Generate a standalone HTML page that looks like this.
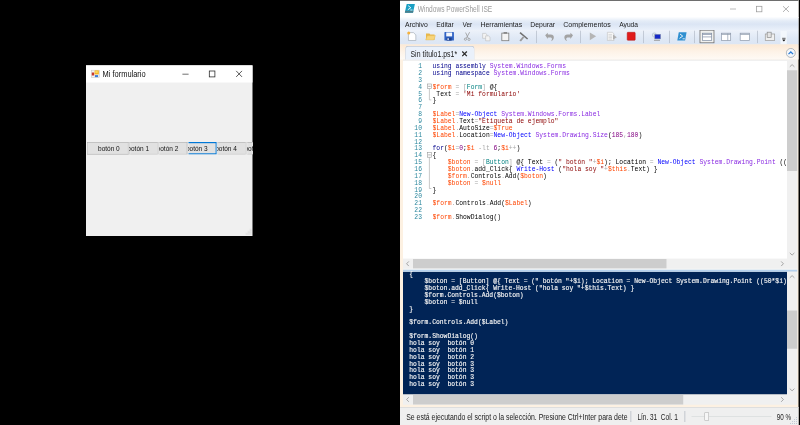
<!DOCTYPE html>
<html lang="es">
<head>
<meta charset="utf-8">
<title>Windows PowerShell ISE</title>
<style>
*{margin:0;padding:0;box-sizing:border-box}
html,body{width:800px;height:425px;overflow:hidden;background:#000}
#outer{position:absolute;left:0;top:0;width:3200px;height:1700px;transform:scale(.25);transform-origin:0 0}
#inner{position:relative;width:800px;height:425px;zoom:4}
body{position:relative;font-family:"Liberation Sans",sans-serif;color:#000}
.a{position:absolute}
.t{position:absolute;white-space:pre;line-height:1;transform-origin:0 0;will-change:opacity}
/* ---------- form window ---------- */
#form{left:86px;top:65.300px;width:166.600px;height:170.600px;background:#f0f0f0;overflow:hidden}
#ftitle{left:0;top:0;width:167px;height:17.300px;background:#fff}
#btns{left:0;top:-0.300px;width:668px;height:684px;transform:scale(.25);transform-origin:0 0}
.btn{position:absolute;top:308px;width:169.600px;height:50px;background:#e1e1e1;border:2.400px solid #adadad;font-size:26px;line-height:45.200px;white-space:pre;overflow:hidden;color:#111;text-align:center;clip-path:inset(0 0 0 56px)}
.btn span{display:block;will-change:opacity;padding-top:2px;padding-left:1.500px}
.btn.f{border:4.800px solid #0078d7;line-height:40.400px}
.btn.z{clip-path:none}
/* ---------- ISE window ---------- */
#ise{left:400px;top:0;width:398.6px;height:425px;background:#fdf1e2}
#ititle{left:0;top:0;width:100%;height:18px;background:#fff;border-top:1px solid #6e6e6e}
#menu{left:0;top:17px;width:100%;height:13px;background:linear-gradient(#fdfeff 0%,#e4ecf7 30%,#dbe5f4 55%,#e9f0fa 100%)}
.mi{position:absolute;top:20.2px;font-size:7.05px;line-height:1;white-space:pre;color:#1a1a1a}
#tool{left:0;top:30px;width:100%;height:14.6px;background:linear-gradient(#edf2fa 0%,#dfe8f5 60%,#dce6f4 100%)}
#tabs{left:0;top:44.6px;width:100%;height:15px;background:linear-gradient(#fce9d5 0%,#fdf3e8 50%,#fefaf5 100%)}
#tab{left:5.2px;top:46px;width:69.4px;height:14.600px;background:#eaf1fb;border:0.7px solid #a9b8cc;border-bottom:none;border-radius:3px 3px 0 0}
#edwrap{left:3px;top:59.4px;width:394.2px;height:210.4px;background:#f0f0f0}
#editor{left:3px;top:61px;width:384.1px;height:197.7px;background:#fff;overflow:hidden}
.code{position:absolute;font-family:"Liberation Mono",monospace;font-size:25.42px;line-height:27.44px;white-space:pre;letter-spacing:0;transform:scale(.25);transform-origin:0 0;will-change:opacity}
#nums{left:0;top:1.9px;width:76px;text-align:right;color:#2b879e}
#src{left:29.55px;top:1.9px;color:#000}
.k{color:#00008b}.ty{color:#8a2be2}.v{color:#ff4500}.o{color:#a9a9a9}.tp{color:#008080}.s{color:#8b0000}.c{color:#0000ff}.n{color:#800080}
#console{left:3px;top:271.8px;width:384.1px;height:122.700px;background:#012456;overflow:hidden}
#ctext{left:6.2px;top:-0.6px;color:#f4f4f4;-webkit-text-stroke:0.600px #f4f4f4}
.sbv{position:absolute;width:10.2px;background:#f0f0f0}
.sbh{position:absolute;height:10px;background:#f0f0f0}
.thumb{position:absolute;background:#cdcdcd}
#status{left:0;top:406.900px;width:100%;height:18.100px;background:#efefef;border-top:0.750px solid #d9d9d9}
.st{position:absolute;top:414px;font-size:7px;line-height:1;white-space:pre;color:#1a1a1a}
.sep{position:absolute;width:0.7px;background:#b4b9c2}
</style>
</head>
<body>
<div id="outer"><div id="inner">

<!-- ================= Form window ================= -->
<div id="form" class="a">
  <div id="ftitle" class="a"></div>
  <svg class="a" style="left:5px;top:4.200px" width="9" height="9" viewBox="0 0 9 9">
    <rect x="0.2" y="0.6" width="8.3" height="7.6" fill="#f4f4f4" stroke="#b5b5b5" stroke-width="0.4"/>
    <rect x="0.8" y="3" width="2.4" height="3" fill="#c8392b"/>
    <rect x="3.6" y="0.9" width="4.2" height="4" fill="#f2b01e"/>
    <rect x="4.2" y="1.5" width="2.6" height="2.2" fill="#fbd75a"/>
    <rect x="3.9" y="5.6" width="3.2" height="2" fill="#3a7bd5"/>
  </svg>
  <div class="t" style="left:16.57px;top:4.3px;font-size:8.4px;color:#111;transform:scaleX(0.8894)">Mi formulario</div>
  <svg class="a" style="left:90px;top:-0.300px" width="77" height="18" viewBox="0 0 77 18">
    <path d="M6.4 9.2h6.2" stroke="#333" stroke-width="0.7" fill="none"/>
    <rect x="33.3" y="6" width="5.6" height="5.9" stroke="#222" stroke-width="0.75" fill="none"/>
    <path d="M60.2 5.9l5.8 6M66 5.9l-5.8 6" stroke="#222" stroke-width="0.75" fill="none"/>
  </svg>
  <!-- buttons (first added is on top) -->
  <div id="btns" class="a">
    <div class="btn" style="left:588.2px"><span> botón 5</span></div>
    <div class="btn" style="left:471.0px"><span> botón 4</span></div>
    <div class="btn f" style="left:353.9px"><span> botón 3</span></div>
    <div class="btn" style="left:236.7px"><span> botón 2</span></div>
    <div class="btn" style="left:119.6px"><span> botón 1</span></div>
    <div class="btn z" style="left:2.4px"><span> botón 0</span></div>
  </div>
  <svg class="a" style="left:158.400px;top:162.400px" width="8" height="8" viewBox="0 0 8 8">
    <g fill="#bdbdbd"><rect x="5.6" y="1.6" width="1" height="1"/><rect x="5.6" y="3.6" width="1" height="1"/><rect x="3.6" y="3.6" width="1" height="1"/><rect x="5.6" y="5.6" width="1" height="1"/><rect x="3.6" y="5.6" width="1" height="1"/><rect x="1.6" y="5.6" width="1" height="1"/></g>
  </svg>
</div>

<!-- ================= ISE window ================= -->
<div id="ise" class="a">
  <div id="ititle" class="a"></div>
  <div class="t" style="left:17.65px;top:4.4px;font-size:8.4px;color:#9a9a9a;transform:scaleX(0.786)">Windows PowerShell ISE</div>

  <!-- app icon -->
  <svg class="a" style="left:4.6px;top:3.6px" width="11" height="10" viewBox="0 0 11 10">
    <path d="M2.2 0.4h8.2l-1.9 8.8H0.3z" fill="#1ba0c4"/>
    <path d="M0.75 7.2h8.2l-0.45 2H0.3z" fill="#4b7f8c"/>
    <path d="M3.7 2.2l2.6 2-3 2.1" stroke="#fff" stroke-width="0.9" fill="none"/>
    <path d="M5.8 6.5h2.2" stroke="#fff" stroke-width="0.8"/>
  </svg>
  <!-- window controls -->
  <svg class="a" style="left:320px;top:0" width="78" height="18" viewBox="0 0 78 18">
    <path d="M10 9h6" stroke="#a6a6a6" stroke-width="0.75" fill="none"/>
    <rect x="36.4" y="6.3" width="5.5" height="5.5" stroke="#9a9a9a" stroke-width="0.75" fill="none"/>
    <path d="M63 6.2l5.9 5.7M68.9 6.2l-5.9 5.7" stroke="#9a9a9a" stroke-width="0.75" fill="none"/>
  </svg>
  <div id="menu" class="a"></div>
  <div class="t" style="left:5.00px;top:19.700px;font-size:8.0px;color:#1a1a1a;transform:scaleX(0.8552)">Archivo</div>
  <div class="t" style="left:36.20px;top:19.700px;font-size:8.0px;color:#1a1a1a;transform:scaleX(0.8402)">Editar</div>
  <div class="t" style="left:62.50px;top:19.700px;font-size:8.0px;color:#1a1a1a;transform:scaleX(0.8121)">Ver</div>
  <div class="t" style="left:80.38px;top:19.700px;font-size:8.0px;color:#1a1a1a;transform:scaleX(0.8662)">Herramientas</div>
  <div class="t" style="left:130.28px;top:19.700px;font-size:8.0px;color:#1a1a1a;transform:scaleX(0.8605)">Depurar</div>
  <div class="t" style="left:163.25px;top:19.700px;font-size:8.0px;color:#1a1a1a;transform:scaleX(0.8834)">Complementos</div>
  <div class="t" style="left:219.30px;top:19.700px;font-size:8.0px;color:#1a1a1a;transform:scaleX(0.8322)">Ayuda</div>
  <div id="tool" class="a"></div>

  <!-- toolbar icons -->
  <svg class="a" style="left:0;top:30px" width="398.6" height="14.6" viewBox="0 0 398.6 14.6">
    <!-- new -->
    <path d="M8.4 2.6h5l2.4 2.3v5.6H8.4z" fill="#fff" stroke="#9aa3ad" stroke-width="0.6"/>
    <circle cx="8.7" cy="3" r="1.5" fill="#f6b23c"/>
    <!-- open -->
    <path d="M26 3.6h3.4l0.8 1h4.3v5.4H26z" fill="#e8b84a"/>
    <path d="M25.6 10l1.6-4.4h8.2L33.8 10z" fill="#f7d57b" stroke="#d9a53a" stroke-width="0.3"/>
    <!-- save -->
    <rect x="44.4" y="2.1" width="9.5" height="8.5" rx="0.6" fill="#2f62c4"/>
    <rect x="46.2" y="2.5" width="5.9" height="3.9" fill="#f4f7fc"/>
    <rect x="46.6" y="7.7" width="5" height="2.9" fill="#1d3f8a"/>
    <rect x="47.4" y="8.2" width="1.4" height="1.9" fill="#dfe6f4"/>
    <!-- cut -->
    <g stroke="#9b9b9b" stroke-width="0.8" fill="none"><path d="M69.6 2.2l-3.4 6.2M65.6 2.6l2.6 5.6"/><circle cx="65.4" cy="9.2" r="1.1"/><circle cx="69" cy="9.4" r="1.1"/></g>
    <!-- copy -->
    <g fill="#f3f3f3" stroke="#b4b4b4" stroke-width="0.5"><path d="M82.6 3.4h3l1.4 1.3v3.6h-4.4z"/><path d="M85.6 5.9h3l1.4 1.3v3.6h-4.4z"/></g>
    <!-- paste -->
    <rect x="101.8" y="3.1" width="7" height="7.6" fill="#f4f4f4" stroke="#7d7d7d" stroke-width="0.8"/>
    <rect x="103.6" y="2" width="3.4" height="1.8" fill="#8a8a8a"/>
    <!-- clear console -->
    <path d="M120 2.6l7.6 6.4" stroke="#707070" stroke-width="1.5" fill="none"/>
    <path d="M119.4 10.6l3.4-4.2 1.4 1.2-3.2 4z" fill="#9a9a9a"/>
    <!-- sep -->
    <rect x="136.2" y="0.700" width="0.600" height="12.400" fill="#aab3c0"/>
    <!-- undo -->
    <path d="M145.2 5.2l2.6-2.4v1.6h2.8c2.4 0 3.6 1.6 3.2 3.6-0.3 1.5-1.3 2.6-2.9 3.2 1.4-1.400 1.600-3.800-0.600-3.800h-2.500v1.600z" fill="#a3a3a3"/>
    <!-- redo -->
    <path d="M173 5.2l-2.6-2.4v1.6h-2.800c-2.400 0-3.600 1.600-3.200 3.600 0.300 1.500 1.300 2.600 2.900 3.200-1.400-1.400-1.600-3.800 0.600-3.800h2.500v1.600z" fill="#a3a3a3"/>
    <rect x="180.2" y="0.700" width="0.600" height="12.400" fill="#aab3c0"/>
    <!-- run -->
    <path d="M189.800 2.400l6.300 3.900-6.300 3.900z" fill="#b5b5b5"/>
    <!-- run selection -->
    <path d="M207.400 2.300h5l1.600 1.500v6.700h-6.600z" fill="#f6f6f6" stroke="#b8b8b8" stroke-width="0.5"/>
    <path d="M208.500 4.600h3.500M208.500 6.100h3.500M208.500 7.600h3.500M208.500 9.100h3.500" stroke="#bdbdbd" stroke-width="0.5"/>
    <path d="M213 4.600l3.800 2.600-3.800 2.600z" fill="#b0b0b0"/>
    <!-- stop -->
    <rect x="227.200" y="2.300" width="8" height="8" rx="0.700" fill="#e01b1b" stroke="#b31212" stroke-width="0.5"/>
    <rect x="243.300" y="0.700" width="0.600" height="12.400" fill="#aab3c0"/>
    <!-- remote -->
    <circle cx="254.400" cy="5" r="2.100" fill="#dfe9ee" stroke="#9fb3bd" stroke-width="0.5"/>
    <rect x="254.800" y="4.300" width="5.800" height="4.600" fill="#1428c8" stroke="#8a93a5" stroke-width="0.5"/>
    <path d="M254 10.300h6" stroke="#8c8c8c" stroke-width="0.800"/>
    <rect x="269.200" y="0.700" width="0.600" height="12.400" fill="#aab3c0"/>
    <!-- powershell -->
    <path d="M278.800 2.300h7.800l-1.500 8.200h-7.800z" fill="#2f8fd0"/>
    <path d="M280 4l2.700 2.100-3.200 2.300" stroke="#fff" stroke-width="0.9" fill="none"/>
    <path d="M282.600 8.800h2.200" stroke="#fff" stroke-width="0.800"/>
    <rect x="294.200" y="0.700" width="0.600" height="12.400" fill="#aab3c0"/>
    <!-- layout 1 (selected) -->
    <rect x="300" y="0.200" width="14" height="12.600" fill="#f1f1ef" stroke="#6f6f6f" stroke-width="0.800"/>
    <rect x="302.500" y="3.200" width="9.200" height="7.200" fill="#fff" stroke="#7f8da3" stroke-width="0.700"/>
    <path d="M302.500 4.200h9.200" stroke="#7f8da3" stroke-width="1"/>
    <path d="M302.500 6.900h9.200" stroke="#7f8da3" stroke-width="0.700"/>
    <!-- layout 2 -->
    <rect x="321.400" y="3.200" width="9.300" height="7.200" fill="#fff" stroke="#8d99ab" stroke-width="0.700"/>
    <path d="M321.400 4.200h9.300" stroke="#8d99ab" stroke-width="1"/>
    <path d="M327.800 3.500v6.900" stroke="#8d99ab" stroke-width="0.700"/>
    <!-- layout 3 -->
    <rect x="340.200" y="3.200" width="9.300" height="7.200" fill="#fff" stroke="#8d99ab" stroke-width="0.700"/>
    <path d="M340.200 4.200h9.300" stroke="#8d99ab" stroke-width="1"/>
    <rect x="357.100" y="0.700" width="0.600" height="12.400" fill="#aab3c0"/>
    <!-- addon -->
    <rect x="365.300" y="4" width="9.400" height="6.600" fill="#f0f0f0" stroke="#9a9a9a" stroke-width="0.700"/>
    <rect x="367.200" y="2.200" width="4" height="5.400" fill="#e4e4e4" stroke="#8c8c8c" stroke-width="0.700"/>
    <!-- overflow -->
    <rect x="380.600" y="1" width="6.200" height="13.600" fill="#f3f7fc"/>
    <path d="M382.200 8.300h3.400" stroke="#222" stroke-width="0.700"/>
    <path d="M382.200 9.400h3.400l-1.700 2z" fill="#111"/>
  </svg>
  <div id="tabs" class="a"></div>
  <div id="tab" class="a"></div>
  <div class="t" style="left:10.45px;top:49.65px;font-size:8.2px;color:#1a1a1a;transform:scaleX(0.8454)">Sin título1.ps1*</div>

  <svg class="a" style="left:61.200px;top:50.600px" width="7" height="7" viewBox="0 0 7 7"><path d="M1 1l4.600 4.600M5.600 1l-4.600 4.600" stroke="#2a2a2a" stroke-width="1.250" fill="none"/></svg>
  <svg class="a" style="left:385.4px;top:47.8px" width="11" height="11" viewBox="0 0 11 11"><circle cx="5.300" cy="5.200" r="4.500" fill="#f4f6f9" stroke="#9aa0a8" stroke-width="0.700"/><path d="M3 6.400l2.300-2.200 2.300 2.200" stroke="#2f7fd6" stroke-width="1.300" fill="none"/></svg>
  <div id="edwrap" class="a"></div>
  <div id="editor" class="a">

    <svg class="a" style="left:0;top:0" width="384" height="198" viewBox="0 0 384 198">
      <g stroke="#a5a5a5" stroke-width="0.600" fill="none">
        <path d="M26.400 27.600V38.900H28.300"/>
        <path d="M26.400 96.200V127.500H28.300"/>
      </g>
      <g stroke="#9a9a9a" stroke-width="0.600" fill="#fff">
        <rect x="24.300" y="23" width="4.300" height="4.600"/>
        <rect x="24.300" y="91.600" width="4.300" height="4.600"/>
      </g>
      <g stroke="#777" stroke-width="0.600"><path d="M25.200 25.300h2.500M25.200 93.900h2.500"/></g>
    </svg>
<div id="nums" class="code">1
2
3
4
5
6
7
8
9
10
11
12
13
14
15
16
17
18
19
20
21
22
23</div>
<div id="src" class="code"><span class="k">using assembly</span> <span class="ty">System.Windows.Forms</span>
<span class="k">using namespace</span> <span class="ty">System.Windows.Forms</span>

<span class="v">$form</span> <span class="o">=</span> <span class="o">[</span><span class="tp">Form</span><span class="o">]</span> @{
 Text <span class="o">=</span> <span class="s">'Mi formulario'</span>
}

<span class="v">$Label</span><span class="o">=</span><span class="c">New-Object</span> <span class="ty">System.Windows.Forms.Label</span>
<span class="v">$Label</span><span class="o">.</span>Text<span class="o">=</span><span class="s">"Etiqueta de ejemplo"</span>
<span class="v">$Label</span><span class="o">.</span>AutoSize<span class="o">=</span><span class="v">$True</span>
<span class="v">$Label</span><span class="o">.</span>Location<span class="o">=</span><span class="c">New-Object</span> <span class="ty">System.Drawing.Size</span>(<span class="n">185</span><span class="o">,</span><span class="n">180</span>)

<span class="k">for</span>(<span class="v">$i</span><span class="o">=</span><span class="n">0</span>;<span class="v">$i</span> <span class="o">-lt</span> <span class="n">6</span>;<span class="v">$i</span><span class="o">++</span>)
{
    <span class="v">$boton</span> <span class="o">=</span> <span class="o">[</span><span class="tp">Button</span><span class="o">]</span> @{ Text <span class="o">=</span> (<span class="s">" botón "</span><span class="o">+</span><span class="v">$i</span>); Location <span class="o">=</span> <span class="c">New-Object</span> <span class="ty">System.Drawing.Point</span> ((<span class="n">50</span><span class="o">*</span><span class="v">$i</span>)<span class="o">,</span><span class="n">100</span>) }
    <span class="v">$boton</span><span class="o">.</span>add_Click{ <span class="c">Write-Host</span> (<span class="s">"hola soy "</span><span class="o">+</span><span class="v">$this</span><span class="o">.</span>Text) }
    <span class="v">$form</span><span class="o">.</span>Controls<span class="o">.</span>Add(<span class="v">$boton</span>)
    <span class="v">$boton</span> <span class="o">=</span> <span class="v">$null</span>
}

<span class="v">$form</span><span class="o">.</span>Controls<span class="o">.</span>Add(<span class="v">$Label</span>)

<span class="v">$form</span><span class="o">.</span>ShowDialog()</div>
  </div>
  <div id="console" class="a">
<div id="ctext" class="code">{
    $boton = [Button] @{ Text = (" botón "+$i); Location = New-Object System.Drawing.Point ((50*$i),100) }
    $boton.add_Click{ Write-Host ("hola soy "+$this.Text) }
    $form.Controls.Add($boton)
    $boton = $null
}

$form.Controls.Add($Label)

$form.ShowDialog()
hola soy  botón 0
hola soy  botón 1
hola soy  botón 2
hola soy  botón 3
hola soy  botón 3
hola soy  botón 3
hola soy  botón 3</div>
  </div>

  <!-- editor vertical scrollbar -->
  <div class="sbv" style="left:387.1px;top:61px;height:197.700px"></div>
  <div class="thumb" style="left:387.1px;top:70.200px;width:10.100px;height:100.900px"></div>
  <svg class="a" style="left:387.1px;top:61px" width="10.200" height="9.200" viewBox="0 0 10.200 9.200"><path d="M2.800 5.800l2.300-2.200 2.300 2.200" stroke="#8c8c8c" stroke-width="0.750" fill="none"/></svg>
  <svg class="a" style="left:387.1px;top:249.500px" width="10.200" height="9.200" viewBox="0 0 10.200 9.200"><path d="M2.800 3.400l2.300 2.200 2.300-2.200" stroke="#8c8c8c" stroke-width="0.750" fill="none"/></svg>
  <!-- editor horizontal scrollbar -->
  <div class="sbh" style="left:3px;top:258.700px;width:394.200px"></div>
  <div class="thumb" style="left:12.900px;top:259px;width:253.500px;height:9.500px"></div>
  <svg class="a" style="left:3px;top:258.700px" width="10" height="10" viewBox="0 0 10 10"><path d="M5.800 2.700l-2.200 2.300 2.200 2.300" stroke="#8c8c8c" stroke-width="0.750" fill="none"/></svg>
  <svg class="a" style="left:377.100px;top:258.700px" width="10" height="10" viewBox="0 0 10 10"><path d="M4.200 2.700l2.200 2.300-2.200 2.300" stroke="#8c8c8c" stroke-width="0.750" fill="none"/></svg>
  <!-- splitter -->
  <div class="a" style="left:3px;top:268.700px;width:394.200px;height:1.100px;background:#f7f7f7"></div>
  <div class="a" style="left:3px;top:269.800px;width:394.200px;height:2px;background:#b5d1ee"></div>
  <!-- console vertical scrollbar -->
  <div class="sbv" style="left:387.100px;top:271.800px;height:122.700px"></div>
  <div class="thumb" style="left:387.100px;top:310.600px;width:10.100px;height:38.100px"></div>
  <svg class="a" style="left:387.100px;top:272px" width="10.200" height="9.200" viewBox="0 0 10.200 9.200"><path d="M2.800 5.800l2.300-2.200 2.300 2.200" stroke="#8c8c8c" stroke-width="0.750" fill="none"/></svg>
  <svg class="a" style="left:387.100px;top:385.200px" width="10.200" height="9.200" viewBox="0 0 10.200 9.200"><path d="M2.800 3.400l2.300 2.200 2.300-2.200" stroke="#8c8c8c" stroke-width="0.750" fill="none"/></svg>
  <!-- console horizontal scrollbar -->
  <div class="sbh" style="left:3px;top:394.500px;width:394.200px;height:10.200px"></div>
  <div class="thumb" style="left:12.900px;top:395px;width:270.300px;height:9.500px"></div>
  <svg class="a" style="left:3px;top:394.600px" width="10" height="10" viewBox="0 0 10 10"><path d="M5.800 2.700l-2.200 2.300 2.200 2.300" stroke="#8c8c8c" stroke-width="0.750" fill="none"/></svg>
  <svg class="a" style="left:377.100px;top:394.600px" width="10" height="10" viewBox="0 0 10 10"><path d="M4.200 2.700l2.200 2.300-2.200 2.300" stroke="#8c8c8c" stroke-width="0.750" fill="none"/></svg>
  <div id="status" class="a"></div>
  <div class="t" style="left:6.35px;top:412.8px;font-size:8.2px;color:#1a1a1a;transform:scaleX(0.842)">Se está ejecutando el script o la selección. Presione Ctrl+Inter para dete</div>
  <div class="t" style="left:237.53px;top:412.8px;font-size:8.2px;color:#1a1a1a;transform:scaleX(0.7837)">Lín. 31</div>
  <div class="t" style="left:260.68px;top:412.8px;font-size:8.2px;color:#1a1a1a;transform:scaleX(0.8035)">Col. 1</div>
  <div class="t" style="left:376.67px;top:412.8px;font-size:8.2px;color:#1a1a1a;transform:scaleX(0.768)">90 %</div>
  <div class="sep" style="left:230.500px;top:411px;height:11px"></div>
  <div class="sep" style="left:284.500px;top:411px;height:11px"></div>
  <div class="a" style="left:291.400px;top:416.200px;width:80px;height:0.800px;background:#d9dcdc"></div>
  <div class="a" style="left:304.400px;top:412.600px;width:4.500px;height:7.800px;background:#f6f6f6;border:0.700px solid #a8a8a8"></div>
  <svg class="a" style="left:390px;top:416px" width="9" height="9" viewBox="0 0 9 9"><g fill="#c3cad6"><rect x="6" y="1" width="1" height="1"/><rect x="6" y="3" width="1" height="1"/><rect x="4" y="3" width="1" height="1"/><rect x="6" y="5" width="1" height="1"/><rect x="4" y="5" width="1" height="1"/><rect x="2" y="5" width="1" height="1"/><rect x="6" y="7" width="1" height="1"/><rect x="4" y="7" width="1" height="1"/><rect x="2" y="7" width="1" height="1"/><rect x="0" y="7" width="1" height="1"/></g></svg>

</div>
</div></div>
</body>
</html>
